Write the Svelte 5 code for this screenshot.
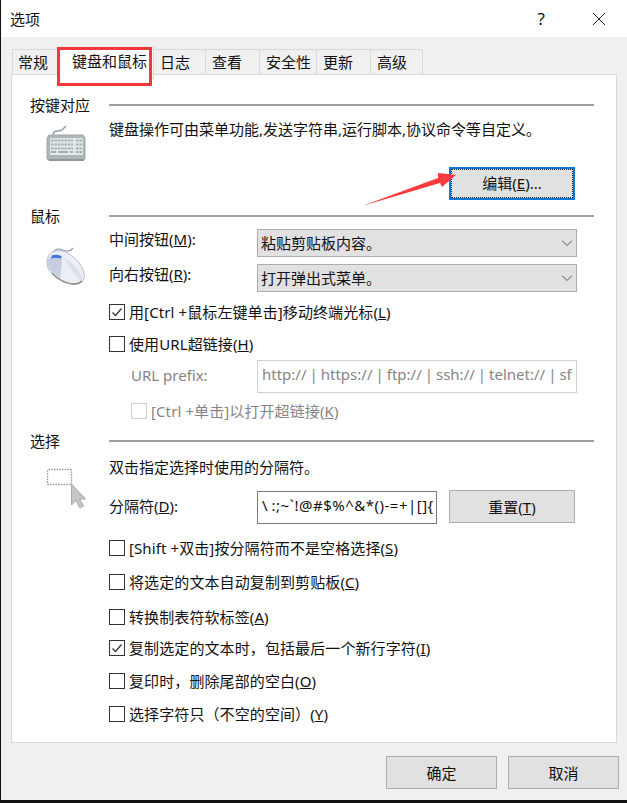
<script lang="ts">
  const tabs = [
    { label: '常规', width: 47 },
    { label: '键盘和鼠标', width: 95, active: true },
    { label: '日志', width: 52 },
    { label: '查看', width: 54 },
    { label: '安全性', width: 57 },
    { label: '更新', width: 54 },
    { label: '高级', width: 52 },
  ];

  const selectChecks = [
    { text: '[Shift +双击]按分隔符而不是空格选择', key: 'S', gap: 15 },
    { text: '将选定的文本自动复制到剪贴板', key: 'C', gap: 17 },
    { text: '转换制表符软标签', key: 'A', gap: 18 },
    { text: '复制选定的文本时，包括最后一个新行字符', key: 'I', gap: 14, checked: true },
    { text: '复印时，删除尾部的空白', key: 'O', gap: 16 },
    { text: '选择字符只（不空的空间）', key: 'Y', gap: 16 },
  ];
</script>

<div class="window">
  <div class="titlebar">
    <span class="title">选项</span>
    <span class="help">?</span>
    <svg class="close" width="12" height="12" viewBox="0 0 12 12"><path d="M0 0l12 12M12 0L0 12" stroke="#222" stroke-width="1" fill="none" /></svg>
  </div>

  <div class="tabs">
    {#each tabs as tab}
      <div class="tab" class:active={tab.active} style:width="{tab.width}px">{tab.label}</div>
    {/each}
  </div>

  <div class="panel">
    <section class="group first">
      <div class="head"><span>按键对应</span><i></i></div>
      <div class="body">
        <div class="icon">
          <svg width="44" height="38" viewBox="0 0 44 38">
            <path d="M8 11c0-3 2-4 5-4 3-1 4 0 5-2 1-1 2-2 3-3" fill="none" stroke="#8f9a9d" stroke-width="1.4" />
            <path d="M4 11h34l2 3v21l-2 1H4l-2-1V14z" fill="#adb5b8" stroke="#a0a9ac" />
            <rect x="5" y="14" width="33" height="17" fill="#e3e7e8" />
            <path d="M6 16.500h22M6 20.500h22M6 24.500h22M31 16.500h7M31 20.500h7M31 24.500h7M31 28h7" stroke="#a4afb2" stroke-width="2" stroke-dasharray="2.4 1" />
            <path d="M6 28h5M13 28h10M25 28h3" stroke="#a4afb2" stroke-width="2" />
            <path d="M3 35h36v2H4z" fill="#8e989b" />
          </svg>
        </div>
        <div class="content">
          <p class="desc">键盘操作可由菜单功能,发送字符串,运行脚本,协议命令等自定义。</p>
          <div class="edit-row">
            <button class="btn edit"><span>编辑(<u>E</u>)...</span></button>
          </div>
        </div>
      </div>
    </section>

    <section class="group mouse">
      <div class="head"><span>鼠标</span><i></i></div>
      <div class="body">
        <div class="icon">
          <svg width="44" height="42" viewBox="0 0 44 42">
            <path d="M8 7C9 3 14 2 17 4c3 1 6 2 9 0l2-2" fill="none" stroke="#8f94a0" stroke-width="1.1" />
            <path d="M2 15C3 9 6 5 11 5c4-1 9 0 13 3 7 4 13 11 15 19 1 4 0 8-3 9-3 3-8 3-12 1C15 34 8 30 4 24c-2-3-2-6-2-9z" fill="#eceef5" stroke="#b9bdc9" />
            <path d="M2 15c0 6 5 12 13 17 1-7 2-14 2-21-6-3-12-2-15 4z" fill="#c8cee2" />
            <path d="M17 11c3 1 14 7 20 20 1 3 0 4-1 5-6-7-12-18-19-25z" fill="#dde0ea" />
            <path d="M7 9.500c3-1 7-1 10 1l-2 2c-3-1-6-1-9 0z" fill="#3b78d8" />
            <path d="M7 27c5 6 14 11 21 11 3 0 7-1 9-3" fill="none" stroke="#8d8a82" stroke-width="1.4" />
          </svg>
        </div>
        <div class="content">
          <div class="field">
            <label for="mid">中间按钮(<u>M</u>):</label>
            <div class="select" id="mid"><span>粘贴剪贴板内容。</span><svg width="10" height="6" viewBox="0 0 10 6"><path d="M0 .5l5 5 5-5" fill="none" stroke="#555" stroke-width="1" /></svg></div>
          </div>
          <div class="field second">
            <label for="right">向右按钮(<u>R</u>):</label>
            <div class="select" id="right"><span>打开弹出式菜单。</span><svg width="10" height="6" viewBox="0 0 10 6"><path d="M0 .5l5 5 5-5" fill="none" stroke="#555" stroke-width="1" /></svg></div>
          </div>
          <div class="check ctrl-click">
            <span class="box"><svg width="14" height="14" viewBox="0 0 14 14"><path d="M2.500 7.500l3 3 6-7" fill="none" stroke="#333" stroke-width="1.2" /></svg></span>
            <span>用[Ctrl +鼠标左键单击]移动终端光标(<u>L</u>)</span>
          </div>
          <div class="check url-check">
            <span class="box"></span>
            <span>使用URL超链接(<u>H</u>)</span>
          </div>
          <div class="field prefix">
            <label class="off" for="prefix">URL prefix:</label>
            <div class="input off" id="prefix">http:// | https:// | ftp:// | ssh:// | telnet:// | sf</div>
          </div>
          <div class="check nested off">
            <span class="box"></span>
            <span>[Ctrl +单击]以打开超链接(<u>K</u>)</span>
          </div>
        </div>
      </div>
    </section>

    <section class="group selection">
      <div class="head"><span>选择</span><i></i></div>
      <div class="body">
        <div class="icon">
          <svg width="44" height="42" viewBox="0 0 44 42">
            <rect x="2.500" y="2.500" width="24" height="15" rx="1" fill="none" stroke="#9b9b9b" stroke-width="1.3" stroke-dasharray="1.6 1.1" />
            <path d="M26.500 17v21l4.500-4.500 4 7.500 3.500-2-4-7h6z" fill="#c6c6c6" stroke="#a8a8a8" />
          </svg>
        </div>
        <div class="content">
          <p class="desc">双击指定选择时使用的分隔符。</p>
          <div class="field delimiter">
            <label for="delim">分隔符(<u>D</u>):</label>
            <div class="input dark" id="delim">\ :;~`!@#$%^&amp;*()-=+|[]&#123;</div>
            <button class="btn reset">重置(<u>T</u>)</button>
          </div>
          {#each selectChecks as item}
            <div class="check" style:margin-top="{item.gap}px">
              <span class="box">
                {#if item.checked}
                  <svg width="14" height="14" viewBox="0 0 14 14"><path d="M2.500 7.500l3 3 6-7" fill="none" stroke="#333" stroke-width="1.2" /></svg>
                {/if}
              </span>
              <span>{item.text}(<u>{item.key}</u>)</span>
            </div>
          {/each}
        </div>
      </div>
    </section>
  </div>

  <div class="actions">
    <button class="btn action">确定</button>
    <button class="btn action">取消</button>
  </div>

  <!-- annotations pasted over the screenshot -->
  <div class="callout"></div>
  <svg class="arrow" width="100" height="40" viewBox="0 0 100 40">
    <path d="M3 36L79 8l0-5 18 2-14 12-2-4z" fill="#fb3c3c" />
  </svg>
</div>

<style>
  :global(body) {
    margin: 0;
    background: #111;
  }

  .window {
    position: relative;
    width: 626px;
    height: 800px;
    margin-left: 1px;
    background: #f0f0f0;
    font-family: "Noto Sans", "Noto Sans CJK SC", sans-serif;
    font-size: 15px;
    line-height: 20px;
    color: #111;
    overflow: hidden;
  }

  .titlebar {
    display: flex;
    align-items: center;
    height: 37px;
    padding: 0 22px 0 9px;
    background: #fff;
  }

  .title {
    flex: 1;
  }

  .help {
    margin-right: 48px;
    font-size: 17px;
  }

  .tabs {
    display: flex;
    height: 25px;
    margin: 12px 0 0 11px;
  }

  .tab {
    box-sizing: border-box;
    height: 25px;
    padding-left: 6px;
    border: 1px solid #d9d9d9;
    border-left: 0;
    border-bottom: 0;
    line-height: 25px;
    white-space: nowrap;
  }

  .tab:first-child {
    padding-left: 5px;
    border-left: 1px solid #d9d9d9;
  }

  .tab.active {
    position: relative;
    z-index: 1;
    height: 32px;
    margin-top: -2px;
    padding-left: 13px;
    background: #fff;
    line-height: 27px;
  }

  .panel {
    box-sizing: border-box;
    width: 606px;
    height: 669px;
    margin-left: 10px;
    padding: 0 22px 0 18px;
    background: #fff;
    border: 1px solid #d9d9d9;
  }

  .group.first {
    margin-top: 20px;
  }

  .group.mouse {
    margin-top: 6px;
  }

  .group.selection {
    margin-top: 12px;
  }

  .head {
    display: flex;
    align-items: center;
    height: 20px;
  }

  .head span {
    width: 79px;
  }

  .head i {
    flex: 1;
    height: 2px;
    background: #a0a0a0;
  }

  .body {
    display: flex;
  }

  .icon {
    flex: none;
    width: 79px;
    padding: 9px 0 0 15px;
    box-sizing: border-box;
  }

  .mouse .icon {
    padding-top: 20px;
  }

  .selection .icon {
    padding-top: 16px;
  }

  .content {
    flex: 1;
  }

  .desc {
    margin: 0;
    padding-top: 4px;
  }

  .selection .desc {
    padding-top: 6px;
  }

  .edit-row {
    display: flex;
    justify-content: flex-end;
    margin-top: 28px;
    padding-right: 19px;
  }

  .btn {
    box-sizing: border-box;
    background: #e1e1e1;
    border: 1px solid #adadad;
    color: #111;
    font: inherit;
    padding: 0;
  }

  .edit {
    width: 126px;
    height: 33px;
    border: 2px solid #0a78d7;
  }

  .edit span {
    display: block;
    height: 100%;
    line-height: 27px;
    border: 1px dotted #222;
    box-sizing: border-box;
  }

  .field {
    display: flex;
    align-items: center;
  }

  .mouse .field:first-child {
    margin-top: 3px;
  }

  .field.second {
    margin-top: 7px;
  }

  .field label {
    width: 148px;
    flex: none;
    margin-top: -8px;
  }

  .select {
    box-sizing: border-box;
    display: flex;
    align-items: center;
    justify-content: space-between;
    width: 320px;
    height: 28px;
    padding: 0 4px 0 3px;
    background: #e1e1e1;
    border: 1px solid #adadad;
  }

  .check {
    display: flex;
    align-items: center;
    gap: 4px;
    height: 17px;
    letter-spacing: 0.1px;
  }

  .box {
    box-sizing: border-box;
    display: flex;
    width: 16px;
    height: 16px;
    background: #fff;
    border: 1px solid #333;
  }

  .ctrl-click {
    margin-top: 11px;
  }

  .url-check {
    margin-top: 15px;
  }

  .prefix {
    margin-top: 8px;
  }

  .prefix label {
    padding-left: 22px;
    width: 126px;
    margin-top: -4px;
  }

  .off {
    color: #858585;
  }

  .input {
    box-sizing: border-box;
    width: 320px;
    height: 33px;
    padding: 0 4px 4px;
    line-height: 27px;
    background: #fff;
    border: 1px solid #cfcfcf;
    white-space: nowrap;
    overflow: hidden;
    word-spacing: -0.9px;
  }

  .nested {
    margin-top: 9px;
    margin-left: 22px;
  }

  .nested .box {
    border-color: #cfcfcf;
  }

  .delimiter {
    margin-top: 14px;
  }

  .delimiter label {
    margin-top: -4px;
  }

  .input.dark {
    width: 180px;
    line-height: 26px;
    letter-spacing: 0.5px;
    border-color: #7a7a7a;
  }

  .reset {
    width: 126px;
    height: 33px;
    margin-left: 12px;
    margin-top: -2px;
  }

  .actions {
    display: flex;
    justify-content: flex-end;
    gap: 11px;
    margin-top: 13px;
    padding-right: 8px;
  }

  .action {
    width: 111px;
    height: 33px;
  }

  .callout {
    position: absolute;
    left: 56px;
    top: 47px;
    width: 95px;
    height: 39px;
    box-sizing: border-box;
    border: 3px solid #f4373b;
    z-index: 2;
  }

  .arrow {
    position: absolute;
    left: 358px;
    top: 170px;
  }
</style>
